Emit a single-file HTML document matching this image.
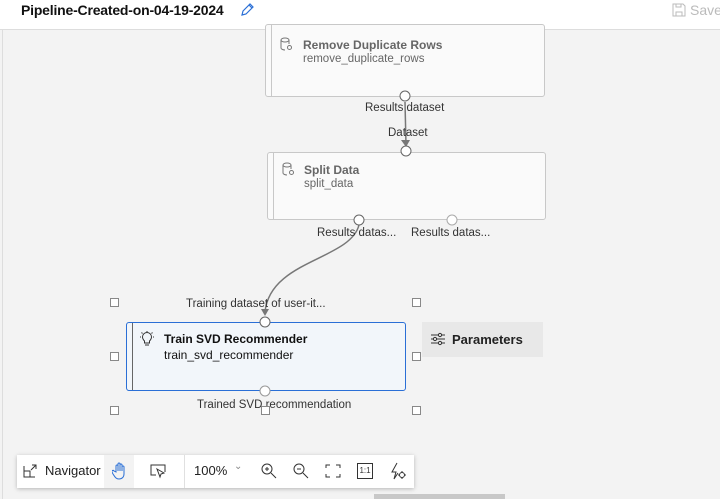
<!DOCTYPE html>
<html><head><style>
body{margin:0;width:720px;height:499px;overflow:hidden;background:#f3f3f3;font-family:"Liberation Sans",sans-serif;position:relative}
.hdr{position:absolute;left:0;top:0;width:720px;height:29px;background:#fff;border-bottom:1px solid #ddd}
.abs{position:absolute}
.node{position:absolute;background:#fafafa;border:1px solid #c8c8c8;border-radius:3px;box-sizing:border-box}
.node .bar{position:absolute;left:5px;top:0;bottom:0;border-left:1px solid #c8c8c8}
.t{font-size:12px;font-weight:bold;color:#666}
.s{font-size:11.5px;color:#666}
.lbl{position:absolute;font-size:11.5px;color:#333;white-space:nowrap}
.h{position:absolute;width:7px;height:7px;border:1.5px solid #888;background:#fff}
</style></head><body>
<div class="hdr">
<div class="abs" style="left:21px;top:2px;font-size:14px;font-weight:bold;color:#111;letter-spacing:-0.2px">Pipeline-Created-on-04-19-2024</div>
<svg class="abs" style="left:239px;top:2px" width="16" height="16" viewBox="0 0 16 16"><path d="M3 13l1-4 7-7 3 3-7 7z M10 3l3 3" fill="none" stroke="#2a6fd6" stroke-width="1.2"/></svg>
<svg class="abs" style="left:671px;top:2px" width="16" height="16" viewBox="0 0 16 16"><path d="M2 2h10l2 2v10H2z M5 14v-4h6v4 M5 2v3h5V2" fill="none" stroke="#bbb" stroke-width="1"/></svg>
<div class="abs" style="left:690px;top:2px;font-size:14px;color:#bbb">Save</div>
</div>
<div class="abs" style="left:2px;top:30px;width:1px;height:469px;background:#ddd"></div>

<div class="node" style="left:265px;top:24px;width:280px;height:73px"><div class="bar"></div>
<svg class="abs" style="left:13px;top:12px" width="14" height="14" viewBox="0 0 14 14"><ellipse cx="6" cy="3" rx="4" ry="2" fill="none" stroke="#777"/><path d="M2 3v8c0 1 2 2 4 2M10 3v4" fill="none" stroke="#777"/><circle cx="10.5" cy="10.5" r="2" fill="none" stroke="#777"/></svg>
<div class="t abs" style="left:37px;top:13px">Remove Duplicate Rows</div>
<div class="s abs" style="left:37px;top:28px">remove_duplicate_rows</div></div>

<div class="node" style="left:267px;top:152px;width:279px;height:68px"><div class="bar"></div>
<svg class="abs" style="left:13px;top:9px" width="14" height="14" viewBox="0 0 14 14"><ellipse cx="6" cy="3" rx="4" ry="2" fill="none" stroke="#777"/><path d="M2 3v8c0 1 2 2 4 2M10 3v4" fill="none" stroke="#777"/><circle cx="10.5" cy="10.5" r="2" fill="none" stroke="#777"/></svg>
<div class="t abs" style="left:36px;top:10px">Split Data</div>
<div class="s abs" style="left:36px;top:25px">split_data</div></div>

<div class="abs" style="left:126px;top:322px;width:280px;height:69px;background:#f2f6fa;border:1px solid #2a6fd6;border-radius:3px;box-sizing:border-box">
<div style="position:absolute;left:5px;top:0;bottom:0;border-left:1px solid #666"></div>
<svg class="abs" style="left:12px;top:8px" width="16" height="16" viewBox="0 0 16 16"><path d="M5.5 10c-1-1-2-2-2-4a4.5 4.5 0 019 0c0 2-1 3-2 4v2h-5z M6 14h4" fill="none" stroke="#333"/><path d="M8 0v1M1 6h1M14 6h1M2.5 1.5l1 1M13.5 1.5l-1 1" stroke="#333"/></svg>
<div class="abs" style="left:37px;top:9px;font-size:12px;font-weight:bold;color:#111">Train SVD Recommender</div>
<div class="abs" style="left:37px;top:25px;font-size:12px;color:#111">train_svd_recommender</div></div>

<svg class="abs" style="left:0;top:0" width="720" height="499">
<path d="M405 102 L406 145" stroke="#777" stroke-width="1.5" fill="none"/>
<path d="M401 140 L406 147 L410 140z" fill="#777"/>
<path d="M359 225 C350 260 270 260 265 312" stroke="#777" stroke-width="1.5" fill="none"/>
<path d="M261 309 L265 316 L269 309z" fill="#777"/>
<g fill="#fff" stroke="#666" stroke-width="1"><circle cx="405" cy="96" r="5"/><circle cx="406" cy="151" r="5"/><circle cx="359" cy="220" r="5"/><circle cx="452" cy="220" r="5" stroke="#aaa"/><circle cx="265" cy="322" r="5"/><circle cx="265" cy="391" r="5" stroke="#999"/></g>
</svg>
<div class="lbl" style="left:365px;top:102px">Results dataset</div>
<div class="lbl" style="left:388px;top:127px">Dataset</div>
<div class="lbl" style="left:317px;top:227px">Results datas...</div>
<div class="lbl" style="left:411px;top:227px">Results datas...</div>
<div class="lbl" style="left:186px;top:298px">Training dataset of user-it...</div>
<div class="lbl" style="left:197px;top:399px">Trained SVD recommendation</div>
<div class="h" style="left:110px;top:298px"></div><div class="h" style="left:412px;top:298px"></div>
<div class="h" style="left:110px;top:352px"></div><div class="h" style="left:412px;top:352px"></div>
<div class="h" style="left:110px;top:406px"></div><div class="h" style="left:261px;top:406px"></div><div class="h" style="left:412px;top:406px"></div>

<div class="abs" style="left:422px;top:322px;width:121px;height:35px;background:#e8e8e8"></div>
<svg class="abs" style="left:430px;top:332px" width="16" height="14" viewBox="0 0 16 14"><path d="M1 3h14M1 7h14M1 11h14" stroke="#333"/><g fill="#e8e8e8" stroke="#333"><circle cx="10" cy="3" r="1.6"/><circle cx="5" cy="7" r="1.6"/><circle cx="10" cy="11" r="1.6"/></g></svg>
<div class="abs" style="left:452px;top:332px;font-size:13px;font-weight:bold;color:#222">Parameters</div>

<div class="abs" style="left:17px;top:455px;width:397px;height:33px;background:#fff;box-shadow:0 1px 4px rgba(0,0,0,.25)">
<svg class="abs" style="left:5px;top:8px" width="16" height="16" viewBox="0 0 16 16"><path d="M2 3v11h11M2 8h6v6M9 7l5-5M10 2h4v4" fill="none" stroke="#333"/></svg>
<div class="abs" style="left:28px;top:8px;font-size:13px;color:#222">Navigator</div>
<div class="abs" style="left:87px;top:0;width:30px;height:33px;background:#f3f3f3"></div>
<svg class="abs" style="left:95px;top:7px" width="16" height="18" viewBox="0 0 16 18"><path d="M4 10V4a1 1 0 012 0v5V2a1 1 0 012 0v7V3a1 1 0 012 0v6V5a1 1 0 012 0v7c0 3-2 5-5 5s-4-2-6-5l-1-2a1 1 0 012-1z" fill="none" stroke="#2a6fd6"/></svg>
<svg class="abs" style="left:132px;top:8px" width="18" height="16" viewBox="0 0 18 16"><path d="M7 12H2V2h14v7" fill="none" stroke="#333"/><path d="M8 6l7 4-3 1-1 3z" fill="none" stroke="#333"/></svg>
<div class="abs" style="left:167px;top:0;width:1px;height:33px;background:#e0e0e0"></div>
<div class="abs" style="left:177px;top:8px;font-size:13px;color:#222">100%</div>
<div class="abs" style="left:217px;top:6px;font-size:10px;color:#888">&#8964;</div>
<svg class="abs" style="left:243px;top:7px" width="18" height="18" viewBox="0 0 18 18"><circle cx="7" cy="7" r="5" fill="none" stroke="#333"/><path d="M11 11l5 5M5 7h4M7 5v4" stroke="#333"/></svg>
<svg class="abs" style="left:275px;top:7px" width="18" height="18" viewBox="0 0 18 18"><circle cx="7" cy="7" r="5" fill="none" stroke="#333"/><path d="M11 11l5 5M5 7h4" stroke="#333"/></svg>
<svg class="abs" style="left:308px;top:9px" width="16" height="14" viewBox="0 0 16 14"><path d="M1 4V1h4M11 1h4v3M15 10v3h-4M5 13H1v-3" fill="none" stroke="#333"/></svg>
<div class="abs" style="left:340px;top:8px;width:14px;height:14px;border:1px solid #333;font-size:8px;line-height:14px;text-align:center;color:#333">1:1</div>
<svg class="abs" style="left:372px;top:7px" width="18" height="18" viewBox="0 0 18 18"><path d="M8 1L3 10h4l-2 7 4-6" fill="none" stroke="#333"/><circle cx="13" cy="13" r="2.5" fill="none" stroke="#333"/><path d="M13 9v1.5M13 15.5V17M9 13h1.5M15.5 13H17" stroke="#333"/></svg>
</div>
<div class="abs" style="left:374px;top:494px;width:131px;height:5px;background:#c8c8c8"></div>
</body></html>
